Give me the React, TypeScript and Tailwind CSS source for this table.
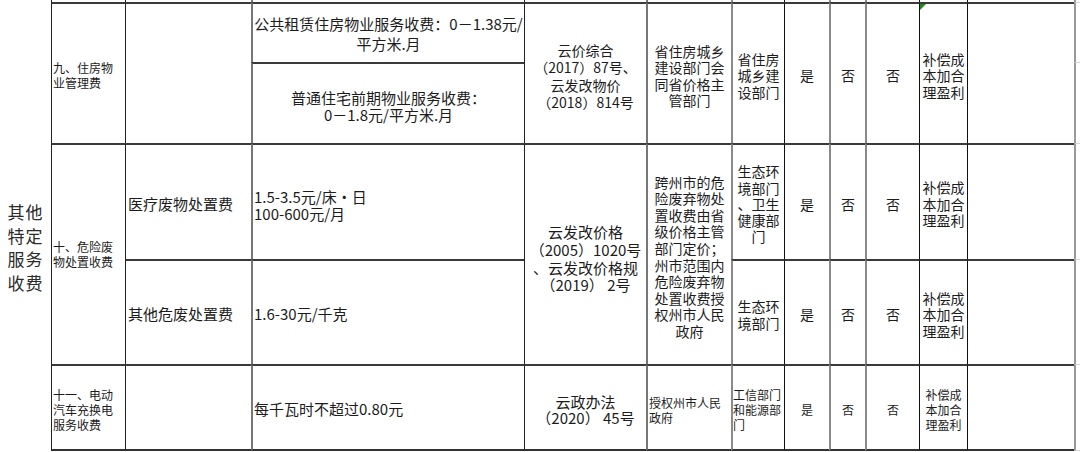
import React from "react";

type CellProps = { className: string; children?: React.ReactNode };
const Cell = ({ className, children }: CellProps) => (
  <div className={"flex items-center whitespace-nowrap " + className}>{children}</div>
);

const T = "border-t-2 border-t-[#3a3a3a]";

export default function App() {
  return (
    <div className="w-[1080px] h-[452px] bg-white text-[#1c1c1c] font-['Noto_Sans_CJK_SC','Liberation_Sans',sans-serif] overflow-hidden">
      <div className="grid grid-cols-[51px_74px_126px_273px_122px_85px_53px_45px_36px_54px_48px_107px_6px] grid-rows-[2px_60px_81px_116px_105px_87px]">
        {/* column 0: big merged label */}
        <div className="col-start-1 row-start-1 row-span-6 flex flex-col items-center pt-[200px] text-[17px] leading-[23.7px] tracking-[1px] text-[#2b2b2b]">
          <span>其他</span>
          <span>特定</span>
          <span>服务</span>
          <span>收费</span>
        </div>

        {/* row 0: tiny stub row with vertical lines only */}
        <div className="col-start-2 row-start-1 border-l border-l-[#222]" />
        <div className="col-start-3 row-start-1 border-l border-l-[#222]" />
        <div className="col-start-4 row-start-1 border-l-2 border-l-[#777]" />
        <div className="col-start-5 row-start-1 border-l border-l-[#222]" />
        <div className="col-start-6 row-start-1 border-l-2 border-l-[#777]" />
        <div className="col-start-7 row-start-1 border-l-2 border-l-[#8a8a8a]" />
        <div className="col-start-8 row-start-1 border-l border-l-[#111]" />
        <div className="col-start-9 row-start-1 border-l-2 border-l-[#8a8a8a]" />
        <div className="col-start-10 row-start-1 border-l-2 border-l-[#8a8a8a]" />
        <div className="col-start-11 row-start-1 border-l border-l-[#111]" />
        <div className="col-start-12 row-start-1 border-l border-l-[#111]" />
        <div className="col-start-13 row-start-1 border-l-2 border-l-[#999]" />

        {/* ===== Row 9: 住房物业管理费 (rows 2-3) ===== */}
        <Cell className={"col-start-2 row-start-2 row-span-2 border-l border-l-[#222] pl-[1px] pt-[2px] " + T}>
          <div className="flex flex-col text-[12px] leading-[15px]">
            <span>九、住房物</span>
            <span>业管理费</span>
          </div>
        </Cell>
        <Cell className={"col-start-3 row-start-2 row-span-2 border-l border-l-[#222] " + T} />
        <Cell className={"col-start-4 row-start-2 justify-center text-center border-l-2 border-l-[#777] pt-[2px] " + T}>
          <div className="flex flex-col text-[15px] leading-[20px]">
            <span>公共租赁住房物业服务收费：0－1.38元/</span>
            <span>平方米.月</span>
          </div>
        </Cell>
        <Cell className={"col-start-4 row-start-3 justify-center text-center border-l-2 border-l-[#777] pt-[4px] " + T}>
          <div className="flex flex-col text-[15px] leading-[17px]">
            <span>普通住宅前期物业服务收费：</span>
            <span>0－1.8元/平方米.月</span>
          </div>
        </Cell>
        <Cell className={"col-start-5 row-start-2 row-span-2 justify-center text-center border-l border-l-[#222] pt-[6px] " + T}>
          <div className="flex flex-col text-[14px] leading-[17.5px]">
            <span>云价综合</span>
            <span>（2017）87号、</span>
            <span>云发改物价</span>
            <span>（2018）814号</span>
          </div>
        </Cell>
        <Cell className={"col-start-6 row-start-2 row-span-2 justify-center text-center border-l-2 border-l-[#777] pt-[4px] " + T}>
          <div className="flex flex-col text-[14px] leading-[16.5px]">
            <span>省住房城乡</span>
            <span>建设部门会</span>
            <span>同省价格主</span>
            <span>管部门</span>
          </div>
        </Cell>
        <Cell className={"col-start-7 row-start-2 row-span-2 justify-center text-center border-l-2 border-l-[#8a8a8a] pt-[4px] " + T}>
          <div className="flex flex-col text-[14px] leading-[16.5px]">
            <span>省住房</span>
            <span>城乡建</span>
            <span>设部门</span>
          </div>
        </Cell>
        <Cell className={"col-start-8 row-start-2 row-span-2 justify-center border-l border-l-[#111] pt-[4px] text-[14px] " + T}>是</Cell>
        <Cell className={"col-start-9 row-start-2 row-span-2 justify-center border-l-2 border-l-[#8a8a8a] pt-[4px] text-[14px] " + T}>否</Cell>
        <Cell className={"col-start-10 row-start-2 row-span-2 justify-center border-l-2 border-l-[#8a8a8a] pt-[4px] text-[14px] " + T}>否</Cell>
        <Cell className={"relative col-start-11 row-start-2 row-span-2 justify-center text-center border-l border-l-[#111] pt-[4px] " + T}>
          <span className="absolute left-0 top-0 w-0 h-0 border-t-[6px] border-r-[6px] border-t-[#1a8a1a] border-r-transparent" />
          <div className="flex flex-col text-[14px] leading-[16.5px]">
            <span>补偿成</span>
            <span>本加合</span>
            <span>理盈利</span>
          </div>
        </Cell>
        <Cell className={"col-start-12 row-start-2 row-span-2 border-l border-l-[#111] " + T} />
        <div className="col-start-13 row-start-2 border-l-2 border-l-[#999] border-t border-t-[#d6d6d6]" />
        <div className="col-start-13 row-start-3 border-l-2 border-l-[#999] border-t border-t-[#d6d6d6]" />

        {/* ===== Row 10: 危险废物处置收费 (rows 4-5) ===== */}
        <Cell className={"col-start-2 row-start-4 row-span-2 border-l border-l-[#222] pl-[1px] pb-[2px] " + T}>
          <div className="flex flex-col text-[12px] leading-[15px]">
            <span>十、危险废</span>
            <span>物处置收费</span>
          </div>
        </Cell>
        <Cell className={"col-start-3 row-start-4 border-l border-l-[#222] pl-[2px] pt-[4px] text-[15px] " + T}>医疗废物处置费</Cell>
        <Cell className={"col-start-3 row-start-5 border-l border-l-[#222] pl-[2px] pt-[4px] text-[15px] " + T}>其他危废处置费</Cell>
        <Cell className={"col-start-4 row-start-4 border-l-2 border-l-[#777] pl-[1px] pt-[6px] " + T}>
          <div className="flex flex-col text-[15px] leading-[17px]">
            <span>1.5-3.5元/床•日</span>
            <span>100-600元/月</span>
          </div>
        </Cell>
        <Cell className={"col-start-4 row-start-5 border-l-2 border-l-[#777] pl-[1px] pt-[4px] text-[15px] " + T}>1.6-30元/千克</Cell>
        <Cell className={"col-start-5 row-start-4 row-span-2 justify-center text-center border-l border-l-[#222] pt-[8px] " + T}>
          <div className="flex flex-col text-[15px] leading-[17.7px]">
            <span>云发改价格</span>
            <span>（2005）1020号</span>
            <span>、云发改价格规</span>
            <span>（2019） 2号</span>
          </div>
        </Cell>
        <Cell className={"col-start-6 row-start-4 row-span-2 justify-center text-center border-l-2 border-l-[#777] pt-[4px] " + T}>
          <div className="flex flex-col text-[14px] leading-[16.6px]">
            <span>跨州市的危</span>
            <span>险废弃物处</span>
            <span>置收费由省</span>
            <span>级价格主管</span>
            <span>部门定价；</span>
            <span>州市范围内</span>
            <span>危险废弃物</span>
            <span>处置收费授</span>
            <span>权州市人民</span>
            <span>政府</span>
          </div>
        </Cell>
        <Cell className={"col-start-7 row-start-4 justify-center text-center border-l-2 border-l-[#8a8a8a] pt-[4px] " + T}>
          <div className="flex flex-col text-[14px] leading-[16.2px]">
            <span>生态环</span>
            <span>境部门</span>
            <span>、卫生</span>
            <span>健康部</span>
            <span>门</span>
          </div>
        </Cell>
        <Cell className={"col-start-7 row-start-5 justify-center text-center border-l-2 border-l-[#8a8a8a] pt-[4px] " + T}>
          <div className="flex flex-col text-[14px] leading-[16.5px]">
            <span>生态环</span>
            <span>境部门</span>
          </div>
        </Cell>
        <Cell className={"col-start-8 row-start-4 justify-center border-l border-l-[#111] pt-[4px] text-[14px] " + T}>是</Cell>
        <Cell className={"col-start-8 row-start-5 justify-center border-l border-l-[#111] pt-[4px] text-[14px] " + T}>是</Cell>
        <Cell className={"col-start-9 row-start-4 justify-center border-l-2 border-l-[#8a8a8a] pt-[4px] text-[14px] " + T}>否</Cell>
        <Cell className={"col-start-9 row-start-5 justify-center border-l-2 border-l-[#8a8a8a] pt-[4px] text-[14px] " + T}>否</Cell>
        <Cell className={"col-start-10 row-start-4 justify-center border-l-2 border-l-[#8a8a8a] pt-[4px] text-[14px] " + T}>否</Cell>
        <Cell className={"col-start-10 row-start-5 justify-center border-l-2 border-l-[#8a8a8a] pt-[4px] text-[14px] " + T}>否</Cell>
        <Cell className={"col-start-11 row-start-4 justify-center text-center border-l border-l-[#111] pt-[4px] " + T}>
          <div className="flex flex-col text-[14px] leading-[16.5px]">
            <span>补偿成</span>
            <span>本加合</span>
            <span>理盈利</span>
          </div>
        </Cell>
        <Cell className={"col-start-11 row-start-5 justify-center text-center border-l border-l-[#111] pt-[4px] " + T}>
          <div className="flex flex-col text-[14px] leading-[16.5px]">
            <span>补偿成</span>
            <span>本加合</span>
            <span>理盈利</span>
          </div>
        </Cell>
        <Cell className={"col-start-12 row-start-4 border-l border-l-[#111] " + T} />
        <Cell className={"col-start-12 row-start-5 border-l border-l-[#111] " + T} />
        <div className="col-start-13 row-start-4 border-l-2 border-l-[#999] border-t border-t-[#d6d6d6]" />
        <div className="col-start-13 row-start-5 border-l-2 border-l-[#999] border-t border-t-[#d6d6d6]" />

        {/* ===== Row 11: 电动汽车充换电服务收费 (row 6) ===== */}
        <Cell className={"col-start-2 row-start-6 border-l border-l-[#222] border-b-2 border-b-[#333] pl-[1px] pt-[4px] " + T}>
          <div className="flex flex-col text-[12px] leading-[15px]">
            <span>十一、电动</span>
            <span>汽车充换电</span>
            <span>服务收费</span>
          </div>
        </Cell>
        <Cell className={"col-start-3 row-start-6 border-l border-l-[#222] border-b-2 border-b-[#333] " + T} />
        <Cell className={"col-start-4 row-start-6 border-l-2 border-l-[#777] border-b-2 border-b-[#333] pl-[1px] pt-[4px] text-[15px] " + T}>每千瓦时不超过0.80元</Cell>
        <Cell className={"col-start-5 row-start-6 justify-center text-center border-l border-l-[#222] border-b-2 border-b-[#333] pt-[4px] " + T}>
          <div className="flex flex-col text-[15px] leading-[16px]">
            <span>云政办法</span>
            <span>（2020） 45号</span>
          </div>
        </Cell>
        <Cell className={"col-start-6 row-start-6 border-l-2 border-l-[#777] border-b-2 border-b-[#333] pl-[1px] pt-[4px] " + T}>
          <div className="flex flex-col text-[12px] leading-[15px]">
            <span>授权州市人民</span>
            <span>政府</span>
          </div>
        </Cell>
        <Cell className={"col-start-7 row-start-6 border-l-2 border-l-[#8a8a8a] border-b-2 border-b-[#333] pt-[4px] " + T}>
          <div className="flex flex-col text-[12px] leading-[15px]">
            <span>工信部门</span>
            <span>和能源部</span>
            <span>门</span>
          </div>
        </Cell>
        <Cell className={"col-start-8 row-start-6 justify-center border-l border-l-[#111] border-b-2 border-b-[#333] pt-[4px] text-[12px] " + T}>是</Cell>
        <Cell className={"col-start-9 row-start-6 justify-center border-l-2 border-l-[#8a8a8a] border-b-2 border-b-[#333] pt-[4px] text-[12px] " + T}>否</Cell>
        <Cell className={"col-start-10 row-start-6 justify-center border-l-2 border-l-[#8a8a8a] border-b-2 border-b-[#333] pt-[4px] text-[12px] " + T}>否</Cell>
        <Cell className={"col-start-11 row-start-6 justify-center text-center border-l border-l-[#111] border-b-2 border-b-[#333] pt-[4px] " + T}>
          <div className="flex flex-col text-[12px] leading-[15px]">
            <span>补偿成</span>
            <span>本加合</span>
            <span>理盈利</span>
          </div>
        </Cell>
        <Cell className={"col-start-12 row-start-6 border-l border-l-[#111] border-b-2 border-b-[#333] " + T} />
        <div className="col-start-13 row-start-6 border-l-2 border-l-[#999] border-t border-t-[#d6d6d6] border-b border-b-[#d6d6d6]" />
      </div>
    </div>
  );
}
